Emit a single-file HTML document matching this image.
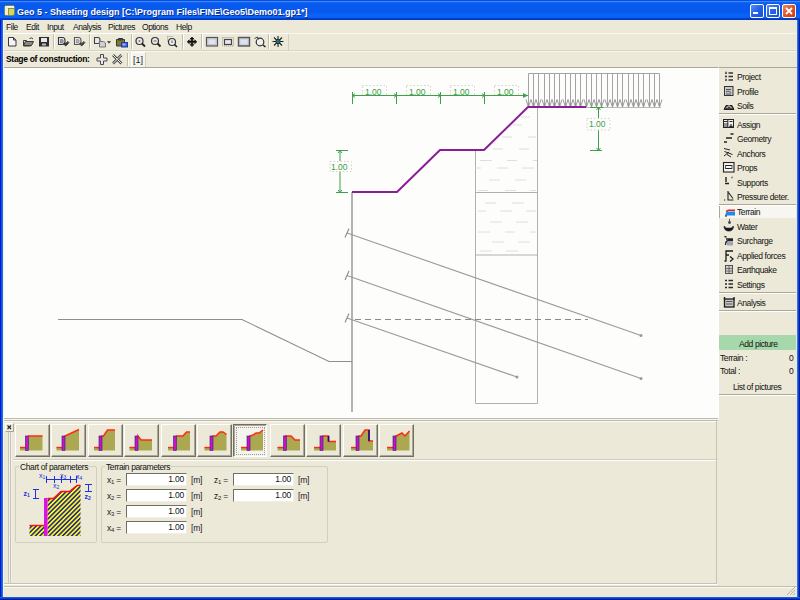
<!DOCTYPE html>
<html><head><meta charset="utf-8">
<style>
*{margin:0;padding:0;box-sizing:border-box}
html,body{width:800px;height:600px;overflow:hidden;background:#ECE9D8;font-family:"Liberation Sans",sans-serif;font-size:8px;color:#000}
.a{position:absolute}
#frame{position:absolute;left:0;top:0;width:800px;height:600px;background:linear-gradient(to right,#0014C8 0,#0014C8 1px,#0058F0 1px,#0058F0 2px,#2A68D8 2px,#2A68D8 3px,transparent 3px,transparent 797px,#3070F0 797px,#3070F0 798px,#0A44D0 798px,#0A44D0 799px,#001C9A 799px),#0A44D0}
#fbot{position:absolute;left:0;top:597px;width:800px;height:3px;background:linear-gradient(#1A5AE8 0,#1A5AE8 1px,#0A3CC8 1px,#0A3CC8 2px,#002090 2px)}
#title{left:0;top:0;width:800px;height:20px;background:linear-gradient(#0A4CDC 0px,#0A4CDC 1px,#3A88FF 1px,#3A88FF 2px,#1566F4 2px,#085AEE 4px,#0858EC 12px,#0A64F8 15px,#0A60F2 18px,#0242D0 18px,#0038C0 20px)}
#ttext{left:17px;top:7px;color:#fff;font-weight:bold;font-size:9px;line-height:11px;white-space:nowrap;text-shadow:1px 1px 0 #0A2C8C}
#client{left:3px;top:20px;width:794px;height:577px;background:#ECE9D8;border-left:1px solid #F4F3EE}
.menu span{position:absolute;top:1.8px;font-size:8.5px;line-height:10px;letter-spacing:-0.45px;color:#111}
.sep{position:absolute;width:2px;border-left:1px solid #C5C2B2;border-right:1px solid #fff}
#canvas{left:4px;top:67px;width:714px;height:353px;background:#FDFDFC;border-top:1px solid #ACA899;border-bottom:2px solid #D8D5C5}
#rpanel{left:718px;top:67px;width:79px;height:352px;background:#ECE9D8;border-top:1px solid #ACA899;border-left:1px solid #fff}
.ri{position:absolute;left:19px;font-size:8.5px;line-height:10px;white-space:nowrap;letter-spacing:-0.4px;color:#111;margin-top:0.7px}
.rsep{position:absolute;left:1px;width:77px;height:2px;border-top:1px solid #ACA899;border-bottom:1px solid #fff}
.btn{position:absolute;top:424px;width:34px;height:34px;background:#ECE9D8;border:1px solid #fff;border-right-color:#ACA899;border-bottom-color:#ACA899;box-shadow:1px 1px 0 #716F64}
.inp{position:absolute;width:61px;height:13px;background:#fff;border-top:1px solid #716F64;border-left:1px solid #716F64;border-bottom:1px solid #F1EFE2;border-right:1px solid #F1EFE2;font-size:8.5px;text-align:right;padding-right:2px;line-height:11px;color:#111;letter-spacing:-0.2px}
.lbl{position:absolute;font-size:8.5px;line-height:10px;color:#222;white-space:nowrap;letter-spacing:-0.2px}
.grp{position:absolute;border:1px solid #D0D0BF;border-radius:2px}
.gt{position:absolute;background:#ECE9D8;font-size:8.5px;line-height:10px;padding:0 1px;white-space:nowrap;letter-spacing:-0.4px;color:#111}
.tsep{position:absolute;top:34px;height:15px;width:2px;border-left:1px solid #C2BEAA;border-right:1px solid #fff}
</style></head><body>
<div id="frame"></div><div id="fbot"></div>
<div id="title" class="a"></div>
<!-- app icon -->
<svg class="a" style="left:4px;top:5px" width="11" height="11"><rect x="0.5" y="0.5" width="10" height="10" rx="2" fill="#D8D060" stroke="#6A8A40" stroke-width="0.8"/><rect x="1" y="1" width="3.5" height="9" fill="#F2F0D8"/><rect x="1" y="1" width="9" height="2" fill="#F4F2E0"/><path d="M4.5 3.5H10M4.5 3V10" stroke="#7A7A60" stroke-width="0.8"/><rect x="5.5" y="4.5" width="4" height="5" fill="#DCD84A"/></svg>
<div id="ttext" class="a">Geo 5 - Sheeting design [C:\Program Files\FINE\Geo5\Demo01.gp1*]</div>
<!-- window buttons -->
<div class="a" style="left:750px;top:4px;width:14px;height:14px;border:1px solid #fff;border-radius:2px;background:linear-gradient(135deg,#5A8DF8,#2462E8 50%,#1550DA)"></div>
<div class="a" style="left:753px;top:12px;width:5px;height:2px;background:#fff"></div>
<div class="a" style="left:766px;top:4px;width:14px;height:14px;border:1px solid #fff;border-radius:2px;background:linear-gradient(135deg,#5A8DF8,#2462E8 50%,#1550DA)"></div>
<div class="a" style="left:769px;top:7px;width:8px;height:8px;border:1px solid #fff;border-top-width:2px"></div>
<div class="a" style="left:782px;top:4px;width:14px;height:14px;border:1px solid #fff;border-radius:2px;background:linear-gradient(135deg,#F08A62,#E0522A 50%,#C83E18)"></div>
<svg class="a" style="left:782px;top:4px" width="14" height="14"><path d="M4 4L10 10M10 4L4 10" stroke="#fff" stroke-width="1.8"/></svg>

<div id="client" class="a"></div>

<!-- menu -->
<div class="a menu" style="left:0;top:20px;width:796px;height:13px">
<span style="left:6px">File</span><span style="left:26px">Edit</span><span style="left:47px">Input</span><span style="left:73px">Analysis</span><span style="left:108px">Pictures</span><span style="left:142px">Options</span><span style="left:176px">Help</span>
</div>
<div class="a" style="left:4px;top:33px;width:284px;height:1px;background:#fff"></div><div class="a" style="left:288px;top:33px;width:509px;height:1px;background:#F6F5EE"></div>

<!-- toolbar -->
<div class="a" style="left:4px;top:50px;width:792px;height:1px;background:#D8D4C4"></div>
<div class="a" style="left:4px;top:51px;width:792px;height:1px;background:#F6F5EE"></div>
<div class="a" style="left:288px;top:34px;width:1px;height:16px;background:#D4D0C0"></div>
<div class="tsep" style="left:53px"></div>
<div class="tsep" style="left:89px"></div>
<div class="tsep" style="left:131px"></div>
<div class="tsep" style="left:182px"></div>
<div class="tsep" style="left:201px"></div>
<div class="tsep" style="left:268px"></div>
<svg class="a" style="left:0;top:33px" width="800" height="18" viewBox="0 33 800 18">
<g stroke-width="1" fill="none">
<!-- new -->
<path d="M8.5 37.5h5l2.5 2.5v6h-7.5z" fill="#F4F4F4" stroke="#3A3A3A"/>
<path d="M13.5 37.5v2.5h2.5" stroke="#3A3A3A"/>
<!-- open -->
<path d="M23.5 40.5h3l1 1h3v4.5h-7z" fill="#D8D8D0" stroke="#3A3A3A"/>
<path d="M23.5 45.5l2-4h8l-2 4z" fill="#8A8A80" stroke="#3A3A3A"/>
<path d="M29.5 38.5q2-1.5 3.5 0.5" stroke="#3A3A3A"/>
<!-- save -->
<rect x="39.5" y="37.5" width="9" height="8.5" fill="#2E2E2E" stroke="#2E2E2E"/>
<rect x="41" y="38" width="6" height="4" fill="#E8E8E8"/>
<rect x="42" y="43.5" width="4" height="2" fill="#BBB"/>
<!-- doc icons -->
<path d="M58.5 37.5h4q2.5 0 2.5 3v1q0 3-2.5 3h-4z" fill="#E8E8F0" stroke="#333" stroke-width="1.1"/>
<path d="M60.5 39.5v3.5h1.5q1.2 0 1.2-1.7q0-1.8-1.2-1.8z" fill="#9AA0C8" stroke="#555" stroke-width="0.6"/>
<path d="M63.5 43.5l2 2.5 1.5-1 2-2.5-1-1-2 1.5z" fill="#3A3A3A" stroke="#222" stroke-width="0.6"/>
<path d="M74.5 37.5h4q2.5 0 2.5 3v1q0 3-2.5 3h-4z" fill="#ECECF0" stroke="#555" stroke-width="1.1"/>
<path d="M76.5 39.5v3.5h1.5q1.2 0 1.2-1.7q0-1.8-1.2-1.8z" fill="#B0B4D0" stroke="#777" stroke-width="0.6"/>
<path d="M79.5 43.5l2 2.5 1.5-1 2-2.5-1-1-2 1.5z" fill="#4A4A4A" stroke="#333" stroke-width="0.6"/>
<path d="M94.5 37.5h3.5q2 0 2 2.5v1q0 2.5-2 2.5h-3.5z" fill="#E8E8EC" stroke="#444" stroke-width="1.1"/>
<path d="M99.5 41.5h4l2 1.5v4h-6z" fill="#D0D0D4" stroke="#777"/>
<path d="M107.5 41.5h3l-1.5 1.8z" fill="#333" stroke="#333" stroke-width="0.6"/>
<!-- clipboard -->
<path d="M116.5 39.5h8v6.5h-8z" fill="#7A7A3A" stroke="#3A3A2A"/>
<path d="M118.5 38.5h4v1.5h-4z" fill="#555" stroke="#333"/>
<rect x="121.5" y="42.5" width="6" height="4.5" fill="#3A64D8" stroke="#2A3A9A"/>
<rect x="122.5" y="43.5" width="3" height="2" fill="#9AB4F0"/>
<!-- zoom in -->
<circle cx="139.5" cy="41" r="3.5" fill="#E8E8E8" stroke="#333" stroke-width="1.2"/>
<path d="M142 43.5l3 3" stroke="#222" stroke-width="1.8"/>
<circle cx="139.5" cy="41" r="1" fill="#777"/>
<!-- zoom out -->
<circle cx="155" cy="41" r="3.5" fill="#E8E8E8" stroke="#333" stroke-width="1.2"/>
<path d="M157.5 43.5l3 3" stroke="#222" stroke-width="1.8"/>
<path d="M153.5 41h3" stroke="#666"/>
<!-- zoom window -->
<path d="M167.5 36.5h6M167.5 36.5v6" stroke="#999" stroke-dasharray="1 1"/>
<circle cx="172" cy="42" r="3.5" fill="#EEE" stroke="#333" stroke-width="1.2"/>
<path d="M174.5 44.5l2.5 2.5" stroke="#222" stroke-width="1.6"/>
<path d="M172 40.5v2.5" stroke="#555"/>
<!-- move -->
<path d="M192 37l2 2h-1.2v2h2v-1.2l2 2-2 2v-1.2h-2v2h1.2l-2 2-2-2h1.2v-2h-2v1.2l-2-2 2-2v1.2h2v-2h-1.2z" fill="#111" stroke="#111" stroke-width="0.6"/>
<!-- rects -->
<rect x="206.5" y="37.5" width="11" height="8.5" fill="#D4D8E4" stroke="#555" stroke-width="1.2"/>
<rect x="208" y="39" width="8" height="5.5" fill="#E0E4F0" stroke="#AAA" stroke-width="0.5"/>
<rect x="222.5" y="37.5" width="11" height="8.5" fill="none" stroke="#999" stroke-dasharray="1 1"/>
<rect x="224.5" y="39.5" width="7" height="5" fill="#E4E8F0" stroke="#444" stroke-width="1.2"/>
<rect x="238.5" y="37.5" width="11" height="8.5" fill="#C8CCD8" stroke="#555" stroke-width="1.4"/>
<rect x="240.5" y="39.5" width="7" height="4.5" fill="#DDE2F0"/>
<!-- rotate -->
<circle cx="260" cy="42" r="3.8" fill="#F0F0F0" stroke="#333" stroke-width="1.2"/>
<path d="M263 45l2.5 2" stroke="#222" stroke-width="1.6"/>
<path d="M254.5 38.5l3-1.5 1 2.5" stroke="#444" stroke-width="1"/>
<!-- sun -->
<g stroke="#222" stroke-width="1.1"><path d="M272.5 41.5h11M278 36v11M274 37.5l8 8M282 37.5l-8 8"/></g>
<circle cx="278" cy="41.5" r="2.2" fill="#0E7A8A" stroke="#222" stroke-width="0.8"/>
</g></svg>

<!-- stage bar -->
<div class="a" style="left:6px;top:53.5px;font-weight:bold;font-size:8.5px;line-height:10px;letter-spacing:-0.3px;white-space:nowrap;color:#000">Stage of construction:</div>
<svg class="a" style="left:95px;top:52px" width="32" height="14"><path d="M5.5 2.5h3v3.5h3.5v3h-3.5v3.5h-3v-3.5h-3.5v-3h3.5z" fill="#E8E8EC" stroke="#4A4A4A" stroke-width="1"/><path d="M18 3l8.5 8.5M26.5 3l-8.5 8.5" stroke="#4A4A4A" stroke-width="2.6"/><path d="M18 3l8.5 8.5M26.5 3l-8.5 8.5" stroke="#F0F0F4" stroke-width="1"/></svg>
<div class="tsep" style="left:127px;top:53px;height:13px"></div>
<div class="a" style="left:131px;top:52px;width:15px;height:15px;background:#F4F3EC;border-left:1px solid #fff;border-top:1px solid #fff;border-right:1px solid #D4D0C0"></div>
<div class="a" style="left:133px;top:54.5px;font-size:9px;line-height:10px;color:#222">[1]</div>

<!-- canvas -->
<div id="canvas" class="a"></div>
<div id="rpanel" class="a"></div>
<div class="a" style="left:719px;top:204px;width:77px;height:14px;background:#F7F6F0;border-top:1px solid #D8D4C4;border-left:1px solid #ACA899"></div>
<div class="ri" style="left:737px;top:71.5px">Project</div><div class="ri" style="left:737px;top:86.0px">Profile</div><div class="ri" style="left:737px;top:100.5px">Soils</div><div class="ri" style="left:737px;top:119.0px">Assign</div><div class="ri" style="left:737px;top:133.5px">Geometry</div><div class="ri" style="left:737px;top:148.0px">Anchors</div><div class="ri" style="left:737px;top:162.5px">Props</div><div class="ri" style="left:737px;top:177.0px">Supports</div><div class="ri" style="left:737px;top:191.5px">Pressure deter.</div><div class="ri" style="left:737px;top:206.0px">Terrain</div><div class="ri" style="left:737px;top:221.0px">Water</div><div class="ri" style="left:737px;top:235.5px">Surcharge</div><div class="ri" style="left:737px;top:250.0px">Applied forces</div><div class="ri" style="left:737px;top:264.5px">Earthquake</div><div class="ri" style="left:737px;top:279.0px">Settings</div><div class="ri" style="left:737px;top:297.0px">Analysis</div><div class="a" style="left:719px;top:113px;width:77px;height:1px;background:#ACA899"></div><div class="a" style="left:719px;top:114px;width:77px;height:1px;background:#fff"></div><div class="a" style="left:719px;top:204px;width:77px;height:1px;background:#ACA899"></div><div class="a" style="left:719px;top:205px;width:77px;height:1px;background:#fff"></div><div class="a" style="left:719px;top:292px;width:77px;height:1px;background:#ACA899"></div><div class="a" style="left:719px;top:293px;width:77px;height:1px;background:#fff"></div><div class="a" style="left:719px;top:310px;width:77px;height:1px;background:#ACA899"></div><div class="a" style="left:719px;top:311px;width:77px;height:1px;background:#fff"></div><div class="a" style="left:719px;top:394px;width:77px;height:1px;background:#ACA899"></div><div class="a" style="left:719px;top:395px;width:77px;height:1px;background:#fff"></div><div class="a" style="left:719px;top:335px;width:77px;height:15px;background:#A6D8AC;border-radius:1px"></div><div class="ri" style="left:739px;top:338px">Add picture</div><div class="ri" style="left:720px;top:352.5px">Terrain :</div><div class="ri" style="left:789px;top:352.5px">0</div><div class="ri" style="left:720px;top:365.5px">Total :</div><div class="ri" style="left:789px;top:365.5px">0</div><div class="ri" style="left:733px;top:381.5px">List of pictures</div><svg class="a" style="left:0;top:0" width="800" height="600" viewBox="0 0 800 600">
<g fill="none" stroke="#333" stroke-width="1">
<!-- project -->
<path d="M725 73h2M725 76.5h2M725 80h2M728.5 73h4.5M728.5 76.5h4.5M728.5 80h4.5" stroke="#333" stroke-width="1.3"/><path d="M725 71.8h1.5M725 75.3h1.5M725 78.8h1.5" stroke="#999" stroke-width="0.8"/>
<!-- profile -->
<rect x="724.5" y="86.5" width="8.5" height="9" fill="#C8C8C8" stroke="#333"/>
<path d="M726 89.5h5M726 92l2-1 3 1.5M726 94h5" stroke="#555"/>
<!-- soils -->
<path d="M724 109.5h10l-2-4h-6z" fill="#444" stroke="#222"/>
<path d="M726.5 108l2.5-2.5 2.5 2.5" stroke="#EEE"/>
<!-- assign -->
<rect x="723.5" y="119.5" width="10" height="8" fill="#F0F0F0" stroke="#222" stroke-width="1"/>
<path d="M724 121.5h3.5M724 124h3.5M724 126h3.5M727.8 119.5v8" stroke="#333" stroke-width="1.1"/>
<path d="M729.5 121.5h3M731 124v3.5M729.5 126l1.5 1.5 1.5-1.5" stroke="#222" stroke-width="1.1"/>
<!-- geometry -->
<path d="M730.5 134h3M726 138h6M724 142h3" stroke="#222" stroke-width="1.3"/>
<!-- anchors -->
<path d="M724 148.5l6 1.5M724.5 151.5l8 3M727 154.5l4 2.5M724 156l5-4" stroke="#222" stroke-width="1"/>
<!-- props -->
<rect x="723.5" y="162.5" width="10.5" height="9.5" fill="#F4F4F0" stroke="#222" stroke-width="1.1"/>
<path d="M725.5 165.5h6.5M725.5 168.5h6.5" stroke="#222" stroke-width="1.1"/>
<path d="M725.5 165v4M732 165v4" stroke="#444" stroke-width="0.9"/>
<!-- supports -->
<path d="M726 177v5M725 183.5h4M731.5 177.5h1" stroke="#222" stroke-width="1.4"/>
<!-- pressure -->
<path d="M728 191v9h5.5M728.5 192.5l4.5 6" stroke="#222" stroke-width="1.1"/><path d="M724 200h1.2" stroke="#222" stroke-width="1.2"/>
<!-- terrain -->
<path d="M725 215.5l1.5-4h8.5V215.5z" fill="#1A8CF0" stroke="none"/>
<path d="M726.5 212q0.5-1.8 2-1.8h6.5" stroke="#E82020" stroke-width="1.5"/>
<path d="M725 216h2" stroke="#111" stroke-width="1.2"/>
<!-- water -->
<path d="M724 226.5h9.5q-0.5 4.5-4.75 4.5t-4.75-4.5z" fill="#1A1A1A" stroke="#1A1A1A" stroke-width="0.8"/>
<ellipse cx="728.75" cy="226.8" rx="3.8" ry="1" fill="#E8E8E8" stroke="none"/>
<circle cx="729.5" cy="222.5" r="1.4" fill="#444" stroke="none"/><path d="M729.5 219v2.5" stroke="#555"/>
<!-- surcharge -->
<path d="M724.5 236.5l2 0.5M726 239h7M725.5 245q0-4 3-4.5h4.5" stroke="#222" stroke-width="1.3"/>
<rect x="727" y="241.5" width="6" height="4" fill="#A0A4B8" stroke="none"/>
<!-- applied forces -->
<path d="M726 260.5v-9.5h7M726 255h3M730 256.5l3 2.5-3 2.5M724.5 261h2" stroke="#1A1A1A" stroke-width="1.3"/>
<!-- earthquake -->
<rect x="725.5" y="265.5" width="7" height="8" fill="#D0D0D0" stroke="#444" stroke-width="0.9"/>
<path d="M725.5 268.5h7M725.5 271h7M729 265.5v8" stroke="#555" stroke-width="0.8"/>
<!-- settings -->
<path d="M725 280.5h2M725 284h2M725 287.5h2M728.5 280.5h4.5M728.5 284h4.5M728.5 287.5h4.5" stroke="#2A2A2A" stroke-width="1.5"/>
<!-- analysis -->
<rect x="724.5" y="299" width="9.5" height="8" fill="#C8C8C8" stroke="#1A1A1A" stroke-width="1.3"/>
<path d="M726 301.5h6.5M726 304h6.5" stroke="#555" stroke-width="1"/>
<path d="M724.5 297v2.5M734 297v2.5" stroke="#1A1A1A" stroke-width="1.4"/>
</g></svg>
<svg class="a" style="left:0;top:0" width="800" height="600" viewBox="0 0 800 600">
<g fill="none" stroke-linecap="butt">
<!-- soil column -->
<path d="M475.5 150V403.5H537.5V107M475.5 192.5H537.5M475.5 255H537.5" stroke="#B0B0B0" stroke-width="1"/>
<g stroke="#E2DEDA" stroke-width="1">
<path d="M521 117H530M512 125H522M502 137H512M528 137H536M493 149H503M519 149H529M480 160.5H492M507 160.5H517M533 160.5H537M475 168H481M497 168H508M522 168H534M489 180H500M515 180H526M478 190.5H488M505 190.5H516M530 190.5H536M485 203H496M512 203H524M478 211H486M500 211H512M526 211H536M490 222H502M516 222H528M478 232H490M505 232H515M530 232H536M492 242H504M518 242H530M480 251H492M506 251H518"/>
</g>
<!-- wall -->
<path d="M352 192V412" stroke="#8C8C8C" stroke-width="1.3"/>
<!-- left ground -->
<path d="M58 319.5H242L329 361.5H352" stroke="#8E8E8E" stroke-width="1.1"/>
<!-- anchors -->
<path d="M347 233L641 335.5M347 275.5L641 378.5M347 318L517 377" stroke="#9A9A9A" stroke-width="1.1"/>
<path d="M345 237.5L349 228.5M345 280L349 271M345 322.5L349 313.5" stroke="#8A8A8A" stroke-width="1.1"/>
<circle cx="641" cy="335.5" r="1.5" fill="#999" stroke="none"/>
<circle cx="641" cy="378.5" r="1.5" fill="#999" stroke="none"/>
<circle cx="517" cy="377" r="1.5" fill="#999" stroke="none"/>
<path d="M355 319.5H588" stroke="#8A8A8A" stroke-width="1" stroke-dasharray="6 4"/>
<!-- surcharge -->
<path d="M528.5 73.5H659.5M528.5 73.5V106M533.5 73.5V106M538.5 73.5V106M544.5 73.5V106M549.5 73.5V106M554.5 73.5V106M559.5 73.5V106M565.5 73.5V106M570.5 73.5V106M575.5 73.5V106M580.5 73.5V106M586.5 73.5V106M591.5 73.5V106M596.5 73.5V106M601.5 73.5V106M607.5 73.5V106M612.5 73.5V106M617.5 73.5V106M622.5 73.5V106M628.5 73.5V106M633.5 73.5V106M638.5 73.5V106M643.5 73.5V106M649.5 73.5V106M654.5 73.5V106M659.5 73.5V106" stroke="#A4A4A4" stroke-width="1"/>
<path d="M526.0 99.5L528.5 107L531.0 99.5M531.0 99.5L533.5 107L536.0 99.5M536.0 99.5L538.5 107L541.0 99.5M542.0 99.5L544.5 107L547.0 99.5M547.0 99.5L549.5 107L552.0 99.5M552.0 99.5L554.5 107L557.0 99.5M557.0 99.5L559.5 107L562.0 99.5M563.0 99.5L565.5 107L568.0 99.5M568.0 99.5L570.5 107L573.0 99.5M573.0 99.5L575.5 107L578.0 99.5M578.0 99.5L580.5 107L583.0 99.5M584.0 99.5L586.5 107L589.0 99.5M589.0 99.5L591.5 107L594.0 99.5M594.0 99.5L596.5 107L599.0 99.5M599.0 99.5L601.5 107L604.0 99.5M605.0 99.5L607.5 107L610.0 99.5M610.0 99.5L612.5 107L615.0 99.5M615.0 99.5L617.5 107L620.0 99.5M620.0 99.5L622.5 107L625.0 99.5M626.0 99.5L628.5 107L631.0 99.5M631.0 99.5L633.5 107L636.0 99.5M636.0 99.5L638.5 107L641.0 99.5M641.0 99.5L643.5 107L646.0 99.5M647.0 99.5L649.5 107L652.0 99.5M652.0 99.5L654.5 107L657.0 99.5M657.0 99.5L659.5 107L662.0 99.5" stroke="#8C8C8C" stroke-width="0.9"/>
<path d="M528 107.5H661" stroke="#B8B8B8" stroke-width="1"/>
<!-- profile -->
<path d="M352 192H397L440 150H484L528 107H586" stroke="#8A1E96" stroke-width="2" stroke-linejoin="round"/>
<!-- dimensions -->
<g stroke="#3DA04D" stroke-width="1">
<path d="M352 95.5H528M352.5 92V104M396.5 92V104M440.5 92V104M484.5 92V104M394 93.5L396.5 95.5L394 97.5M438 93.5L440.5 95.5L438 97.5M482 93.5L484.5 95.5L482 97.5M355 93.5L352.5 95.5L355 97.5" stroke-width="1"/>
<path d="M340 150V161M340 171.5V192M336 150.5H348M336 192.5H348M338 153L340 150.5L342 153M338 190L340 192.5L342 190"/>
<path d="M598.5 107V118M598.5 130V150.5M590 150.5H602M590 107.5H603M596.5 110L598.5 107.5L600.5 110M596.5 148L598.5 150.5L600.5 148"/>
</g>
<g fill="#3DA04D" stroke="none">
<path d="M528 95.5l-5-2.5v5z"/>
</g>
<g stroke="#D8D0C8" stroke-width="1" stroke-dasharray="1.5 2">
<path d="M362.5 85.5H386.5V95M362.5 95V85.5M406.5 85.5H430.5V95M406.5 95V85.5M450.5 85.5H474.5V95M450.5 95V85.5M494.5 85.5H518.5V95M494.5 95V85.5"/>
<path d="M330 161.5H351.5V171.5H330z"/>
<path d="M587 118.5H610V130H587z"/>
</g>
</g>
<g fill="#3A9E4A" font-family="Liberation Sans" font-size="8.5px">
<text x="365" y="94.5">1.00</text><text x="409" y="94.5">1.00</text><text x="453" y="94.5">1.00</text><text x="497" y="94.5">1.00</text>
<text x="331" y="169.5">1.00</text>
<text x="589" y="127">1.00</text>
</g>
</svg>

<div class="a" style="left:4px;top:418px;width:714px;height:4px;background:linear-gradient(#BEBAAA 0,#BEBAAA 1px,#F6F5F0 1px,#F6F5F0 2px,#BEBAAA 2px,#BEBAAA 3px,#FAFAF6 3px)"></div>
<div class="a" style="left:5px;top:423px;width:9px;height:9px;border:1px solid #fff;border-right-color:#ACA899;border-bottom-color:#ACA899;background:#ECE9D8"></div>
<svg class="a" style="left:5px;top:423px" width="9" height="9"><path d="M2.5 2.5L6 6M6 2.5L2.5 6" stroke="#222" stroke-width="1.1"/></svg>
<div class="a" style="left:8px;top:432px;width:1px;height:151px;background:#C8C6BC"></div><div class="a" style="left:9px;top:432px;width:1px;height:151px;background:#F4F3EC"></div>
<div class="a" style="left:10px;top:432px;width:1px;height:151px;background:#C4C2B4"></div>
<div class="a" style="left:11px;top:432px;width:1px;height:151px;background:#F2F1EA"></div>
<div class="a" style="left:15.0px;top:424px;width:35px;height:33px;background:#ECE9D8;border:1px solid #fff;border-right:1px solid #716F64;border-bottom:1px solid #716F64;box-shadow:inset -1px -1px 0 #ACA899"></div>
<div class="a" style="left:51.4px;top:424px;width:35px;height:33px;background:#ECE9D8;border:1px solid #fff;border-right:1px solid #716F64;border-bottom:1px solid #716F64;box-shadow:inset -1px -1px 0 #ACA899"></div>
<div class="a" style="left:87.8px;top:424px;width:35px;height:33px;background:#ECE9D8;border:1px solid #fff;border-right:1px solid #716F64;border-bottom:1px solid #716F64;box-shadow:inset -1px -1px 0 #ACA899"></div>
<div class="a" style="left:124.2px;top:424px;width:35px;height:33px;background:#ECE9D8;border:1px solid #fff;border-right:1px solid #716F64;border-bottom:1px solid #716F64;box-shadow:inset -1px -1px 0 #ACA899"></div>
<div class="a" style="left:160.6px;top:424px;width:35px;height:33px;background:#ECE9D8;border:1px solid #fff;border-right:1px solid #716F64;border-bottom:1px solid #716F64;box-shadow:inset -1px -1px 0 #ACA899"></div>
<div class="a" style="left:197.0px;top:424px;width:35px;height:33px;background:#ECE9D8;border:1px solid #fff;border-right:1px solid #716F64;border-bottom:1px solid #716F64;box-shadow:inset -1px -1px 0 #ACA899"></div>
<div class="a" style="left:233.4px;top:424px;width:34px;height:33px;background:#F4F3EC;border:1px solid #716F64;border-right-color:#fff;border-bottom-color:#fff;box-shadow:inset 1px 1px 0 #ACA899"></div>
<div class="a" style="left:236.4px;top:427px;width:29px;height:28px;border:1px dotted #9A9A9A"></div>
<div class="a" style="left:269.8px;top:424px;width:35px;height:33px;background:#ECE9D8;border:1px solid #fff;border-right:1px solid #716F64;border-bottom:1px solid #716F64;box-shadow:inset -1px -1px 0 #ACA899"></div>
<div class="a" style="left:306.2px;top:424px;width:35px;height:33px;background:#ECE9D8;border:1px solid #fff;border-right:1px solid #716F64;border-bottom:1px solid #716F64;box-shadow:inset -1px -1px 0 #ACA899"></div>
<div class="a" style="left:342.6px;top:424px;width:35px;height:33px;background:#ECE9D8;border:1px solid #fff;border-right:1px solid #716F64;border-bottom:1px solid #716F64;box-shadow:inset -1px -1px 0 #ACA899"></div>
<div class="a" style="left:379.0px;top:424px;width:35px;height:33px;background:#ECE9D8;border:1px solid #fff;border-right:1px solid #716F64;border-bottom:1px solid #716F64;box-shadow:inset -1px -1px 0 #ACA899"></div>
<svg class="a" style="left:0;top:0" width="800" height="600" viewBox="0 0 800 600">
<rect x="20" y="447" width="5.5" height="3.5" fill="#ACA852"/>
<path d="M20 447.5H25.5" stroke="#FF2A10" stroke-width="1.4"/>
<polygon points="28.5,436 28.5,436 42.5,436 42.5,450.5 28.5,450.5" fill="#ACA852"/>
<polyline points="28.5,436.5 28.5,436 42.5,436" fill="none" stroke="#FF2A10" stroke-width="1.5"/>
<rect x="25.5" y="436" width="3" height="14.5" fill="#D010C8" stroke="#202070" stroke-width="0.6"/>
<rect x="56.5" y="447" width="5.5" height="3.5" fill="#ACA852"/>
<path d="M56.5 447.5H62" stroke="#FF2A10" stroke-width="1.4"/>
<polygon points="65,436 65,436 79,429.5 79,450.5 65,450.5" fill="#ACA852"/>
<polyline points="65,436.5 65,436 79,429.5" fill="none" stroke="#FF2A10" stroke-width="1.5"/>
<rect x="62" y="436" width="3" height="14.5" fill="#D010C8" stroke="#202070" stroke-width="0.6"/>
<rect x="94" y="447" width="5" height="3.5" fill="#ACA852"/>
<path d="M94 447.5H99" stroke="#FF2A10" stroke-width="1.4"/>
<polygon points="102,436 102,436 103.5,436 107.5,430 115,430 115,450.5 102,450.5" fill="#ACA852"/>
<polyline points="102,436.5 102,436 103.5,436 107.5,430 115,430" fill="none" stroke="#FF2A10" stroke-width="1.5"/>
<rect x="99" y="436" width="3" height="14.5" fill="#D010C8" stroke="#202070" stroke-width="0.6"/>
<rect x="129.5" y="447" width="5.5" height="3.5" fill="#ACA852"/>
<path d="M129.5 447.5H135" stroke="#FF2A10" stroke-width="1.4"/>
<polygon points="138,436 138,436 141,440 152,440 152,450.5 138,450.5" fill="#ACA852"/>
<polyline points="138,436.5 138,436 141,440 152,440" fill="none" stroke="#FF2A10" stroke-width="1.5"/>
<rect x="135" y="436" width="3" height="14.5" fill="#D010C8" stroke="#202070" stroke-width="0.6"/>
<rect x="168" y="447" width="5.5" height="3.5" fill="#ACA852"/>
<path d="M168 447.5H173.5" stroke="#FF2A10" stroke-width="1.4"/>
<polygon points="176.5,436 176.5,436 183,436 186.5,432 190,432 190,450.5 176.5,450.5" fill="#ACA852"/>
<polyline points="176.5,436.5 176.5,436 183,436 186.5,432 190,432" fill="none" stroke="#FF2A10" stroke-width="1.5"/>
<rect x="173.5" y="436" width="3" height="14.5" fill="#D010C8" stroke="#202070" stroke-width="0.6"/>
<rect x="204.5" y="447" width="5.5" height="3.5" fill="#ACA852"/>
<path d="M204.5 447.5H210" stroke="#FF2A10" stroke-width="1.4"/>
<polygon points="213,436 213,436 216,436 220,432 223,432 226.5,434.5 226.5,450.5 213,450.5" fill="#ACA852"/>
<polyline points="213,436.5 213,436 216,436 220,432 223,432 226.5,434.5" fill="none" stroke="#FF2A10" stroke-width="1.5"/>
<rect x="210" y="436" width="3" height="14.5" fill="#D010C8" stroke="#202070" stroke-width="0.6"/>
<rect x="241" y="447" width="6" height="3.5" fill="#ACA852"/>
<path d="M241 447.5H247" stroke="#FF2A10" stroke-width="1.4"/>
<polygon points="250,436 250,436 253,435 256,433 259,433 263,430 263,450.5 250,450.5" fill="#ACA852"/>
<polyline points="250,436.5 250,436 253,435 256,433 259,433 263,430" fill="none" stroke="#FF2A10" stroke-width="1.5"/>
<rect x="247" y="436" width="3" height="14.5" fill="#D010C8" stroke="#202070" stroke-width="0.6"/>
<rect x="277.5" y="447" width="6.0" height="3.5" fill="#ACA852"/>
<path d="M277.5 447.5H283.5" stroke="#FF2A10" stroke-width="1.4"/>
<polygon points="286.5,436 286,436 291,436 295,440 300,440 300,450.5 286.5,450.5" fill="#ACA852"/>
<polyline points="286.5,436.5 286,436 291,436 295,440 300,440" fill="none" stroke="#FF2A10" stroke-width="1.5"/>
<rect x="283.5" y="436" width="3" height="14.5" fill="#D010C8" stroke="#202070" stroke-width="0.6"/>
<rect x="314" y="447" width="6" height="3.5" fill="#ACA852"/>
<path d="M314 447.5H320" stroke="#FF2A10" stroke-width="1.4"/>
<polygon points="323,436 323,436 328.5,436 328.5,441.5 336,441.5 336,450.5 323,450.5" fill="#ACA852"/>
<polyline points="323,436.5 323,436 328.5,436 328.5,441.5 336,441.5" fill="none" stroke="#FF2A10" stroke-width="1.5"/>
<path d="M328.5 436V441.5" stroke="#10108A" stroke-width="1.6"/>
<rect x="320" y="436" width="3" height="14.5" fill="#D010C8" stroke="#202070" stroke-width="0.6"/>
<rect x="351" y="447" width="5" height="3.5" fill="#ACA852"/>
<path d="M351 447.5H356" stroke="#FF2A10" stroke-width="1.4"/>
<polygon points="359,436 359,436 361,436 365,430 369,430 369,441 373,441 373,450.5 359,450.5" fill="#ACA852"/>
<polyline points="359,436.5 359,436 361,436 365,430 369,430 369,441 373,441" fill="none" stroke="#FF2A10" stroke-width="1.5"/>
<path d="M369 430V441" stroke="#10108A" stroke-width="1.6"/>
<rect x="356" y="436" width="3" height="14.5" fill="#D010C8" stroke="#202070" stroke-width="0.6"/>
<rect x="387" y="447" width="6" height="3.5" fill="#ACA852"/>
<path d="M387 447.5H393" stroke="#FF2A10" stroke-width="1.4"/>
<polygon points="396,436 396,436 400,434 402,433 405,436 409.5,431 409.5,450.5 396,450.5" fill="#ACA852"/>
<polyline points="396,436.5 396,436 400,434 402,433 405,436 409.5,431" fill="none" stroke="#FF2A10" stroke-width="1.5"/>
<rect x="393" y="436" width="3" height="14.5" fill="#D010C8" stroke="#202070" stroke-width="0.6"/>
</svg>
<div class="a" style="left:13px;top:459px;width:705px;height:1px;background:#D0CDBE"></div>
<div class="a" style="left:13px;top:460px;width:705px;height:1px;background:#fff"></div>
<div class="grp" style="left:15px;top:466px;width:82px;height:77px"></div>
<div class="gt" style="left:19px;top:461.5px">Chart of parameters</div>
<div class="grp" style="left:101px;top:466px;width:227px;height:77px"></div>
<div class="gt" style="left:105px;top:461.5px">Terrain parameters</div>
<div class="lbl" style="left:107px;top:474.5px">x<sub style="font-size:6px;vertical-align:-1px">1</sub> =</div>
<div class="inp" style="left:126px;top:473px">1.00</div>
<div class="lbl" style="left:191px;top:474.5px">[m]</div>
<div class="lbl" style="left:107px;top:490.5px">x<sub style="font-size:6px;vertical-align:-1px">2</sub> =</div>
<div class="inp" style="left:126px;top:489px">1.00</div>
<div class="lbl" style="left:191px;top:490.5px">[m]</div>
<div class="lbl" style="left:107px;top:506.5px">x<sub style="font-size:6px;vertical-align:-1px">3</sub> =</div>
<div class="inp" style="left:126px;top:505px">1.00</div>
<div class="lbl" style="left:191px;top:506.5px">[m]</div>
<div class="lbl" style="left:107px;top:522.5px">x<sub style="font-size:6px;vertical-align:-1px">4</sub> =</div>
<div class="inp" style="left:126px;top:521px">1.00</div>
<div class="lbl" style="left:191px;top:522.5px">[m]</div>
<div class="lbl" style="left:214px;top:474.5px">z<sub style="font-size:6px;vertical-align:-1px">1</sub> =</div>
<div class="inp" style="left:233px;top:473px">1.00</div>
<div class="lbl" style="left:298px;top:474.5px">[m]</div>
<div class="lbl" style="left:214px;top:490.5px">z<sub style="font-size:6px;vertical-align:-1px">2</sub> =</div>
<div class="inp" style="left:233px;top:489px">1.00</div>
<div class="lbl" style="left:298px;top:490.5px">[m]</div>
<svg class="a" style="left:0;top:0" width="800" height="600" viewBox="0 0 800 600">
<defs><pattern id="hat" width="3.2" height="3.2" patternUnits="userSpaceOnUse" patternTransform="rotate(45)">
<rect width="3.2" height="3.2" fill="#FFFF00"/><rect width="1.6" height="3.2" fill="#2A2AB0"/></pattern></defs>
<rect x="29.5" y="525" width="14.5" height="11" fill="url(#hat)"/>
<polygon points="47.5,498 53.5,498 61,491 69.5,491 77,485 80.5,485 80.5,536 47.5,536" fill="url(#hat)"/>
<path d="M29.5 525.5H44" stroke="#FF1010" stroke-width="1.4"/>
<polyline points="47.5,498.5 53.5,498.5 61,491.5 69.5,491.5 77,485.5 80.5,485.5" fill="none" stroke="#FF1010" stroke-width="1.6"/>
<rect x="44" y="498" width="3.5" height="38" fill="#E010E0"/>
<g stroke="#2030E0" stroke-width="1" fill="none">
<path d="M46.5 479.5H76.5M46.5 476V483M54.5 476V483M61.5 476V483M70.5 476V483M76.5 476V483"/>
<path d="M35.5 489V498.5M33 489.5H39M33 498.5H39"/>
<path d="M88.5 484.5V491M85 484.5H92M85 491.5H92"/>
</g>
<g fill="#2030E0" font-family="Liberation Sans" font-size="7px">
<text x="39" y="478">x<tspan font-size="5px" dy="1">1</tspan></text>
<text x="60" y="478">x<tspan font-size="5px" dy="1">3</tspan></text>
<text x="76" y="479">x<tspan font-size="5px" dy="1">4</tspan></text>
<text x="53" y="488">x<tspan font-size="5px" dy="1">2</tspan></text>
<text x="23.5" y="496" font-weight="bold">z<tspan font-size="5px" dy="1">1</tspan></text>
<text x="84.5" y="499" font-weight="bold">z<tspan font-size="5px" dy="1">2</tspan></text>
</g>
</svg>
<div class="a" style="left:4px;top:583px;width:713px;height:1px;background:#C8C4B4"></div><div class="a" style="left:4px;top:584px;width:713px;height:1px;background:#fff"></div><div class="a" style="left:716px;top:421px;width:1px;height:163px;background:#C8C4B4"></div><div class="a" style="left:4px;top:586px;width:793px;height:1px;background:#C2BEAE"></div><div class="a" style="left:4px;top:587px;width:793px;height:1px;background:#F8F8F4"></div>
<svg class="a" style="left:784px;top:584px" width="12" height="12"><path d="M11 3L3 11M11 6L6 11M11 9L9 11" stroke="#B8B4A4" stroke-width="1"/></svg>
</body></html>
